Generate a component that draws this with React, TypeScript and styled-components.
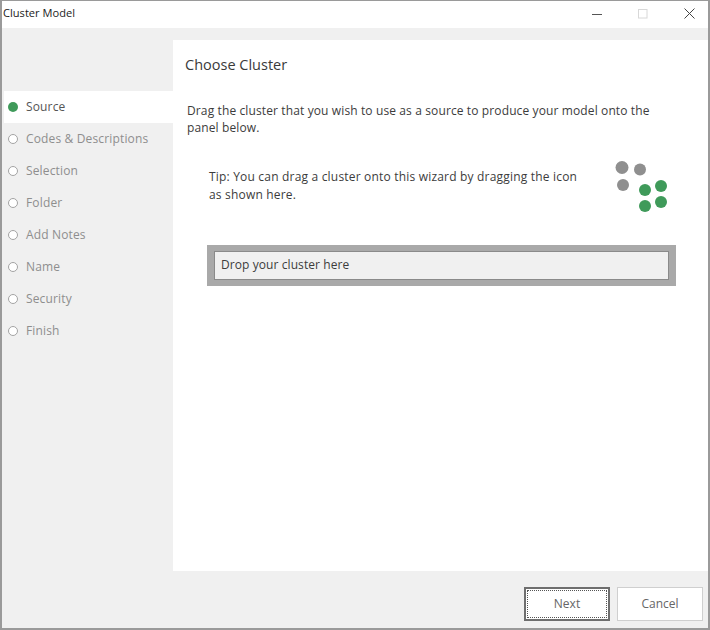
import React from "react";
import styled, { createGlobalStyle } from "styled-components";

const Global = createGlobalStyle`
  html, body { margin: 0; padding: 0; background: #fff; }
  #root { width: 710px; height: 630px; }
`;

const Window = styled.div`
  box-sizing: border-box;
  width: 710px;
  height: 630px;
  display: flex;
  flex-direction: column;
  border: 1px solid #9a9a9a;
  border-width: 1px 2px 2px 2px;
  background: #f0f0f0;
  font-family: "Open Sans", "Noto Sans", sans-serif;
  font-size: 12px;
  color: #3c3c3c;
`;

const TitleBar = styled.header`
  height: 27px;
  flex: none;
  display: flex;
  align-items: center;
  justify-content: space-between;
  background: #fff;
`;

const Title = styled.span`
  font-size: 11.1px;
  color: #222;
  margin-left: 1px;
  padding-bottom: 4px;
`;

const Controls = styled.div`
  display: flex;
  gap: 16px;
  margin-right: 4px;
  padding-bottom: 2px;
`;

const ControlButton = styled.div`
  width: 30px;
  height: 24px;
  display: flex;
  align-items: center;
  justify-content: center;
`;

const Body = styled.div`
  flex: 1;
  display: flex;
  min-height: 0;
  padding-top: 12px;
`;

const Sidebar = styled.nav`
  width: 171px;
  flex: none;
  box-sizing: border-box;
  padding: 51px 0 0 2px;
  display: flex;
  flex-direction: column;
`;

const Step = styled.div<{ $active?: boolean }>`
  height: 32px;
  display: flex;
  align-items: center;
  gap: 8px;
  padding-left: 4px;
  box-sizing: border-box;
  background: ${(p) => (p.$active ? "#fff" : "transparent")};
  color: ${(p) => (p.$active ? "#555" : "#8e8e8e")};
  font-size: 12px;
  letter-spacing: 0.15px;
`;

const StepLabel = styled.span`
  padding-bottom: 2px;
`;

const Dot = styled.span<{ $active?: boolean }>`
  width: 10px;
  height: 10px;
  box-sizing: border-box;
  border-radius: 50%;
  flex: none;
  background: ${(p) => (p.$active ? "#3f9a5a" : "#fff")};
  border: ${(p) => (p.$active ? "none" : "1.5px solid #a3a3a3")};
`;

const Panel = styled.main`
  flex: 1;
  background: #fff;
  padding: 14px 13px 0 12px;
  display: flex;
  flex-direction: column;
  min-width: 0;
`;

const Heading = styled.h1`
  margin: 0;
  font-size: 14.5px;
  font-weight: 400;
  line-height: 22px;
  color: #3a3a3a;
`;

const Intro = styled.p`
  margin: 26px 0 0 2px;
  width: 490px;
  font-size: 12px;
  line-height: 17px;
  color: #3c3c3c;
  letter-spacing: 0.12px;
`;

const TipRow = styled.div`
  margin: 32px 0 0 24px;
  display: flex;
  justify-content: space-between;
  width: 459px;
`;

const TipText = styled.p`
  margin: 0;
  width: 375px;
  font-size: 12px;
  line-height: 18px;
  color: #3c3c3c;
  letter-spacing: 0.19px;
`;

const ClusterIcon = styled.svg`
  display: block;
  flex: none;
  margin: -7px -1px 0 0;
`;

const DropOuter = styled.div`
  margin: 30px 0 0 22px;
  width: 469px;
  height: 41px;
  box-sizing: border-box;
  background: #a9a9a9;
  padding: 6px 7px;
`;

const DropInner = styled.div`
  box-sizing: border-box;
  height: 29px;
  border: 1px solid #8a8a8a;
  background: #f0f0f0;
  display: flex;
  align-items: center;
  padding: 0 0 2px 6px;
  font-size: 12px;
  color: #3c3c3c;
  letter-spacing: 0.08px;
`;

const Footer = styled.footer`
  height: 57px;
  flex: none;
  display: flex;
  justify-content: flex-end;
  align-items: flex-start;
  gap: 7px;
  padding: 16px 5px 0 0;
  box-sizing: border-box;
`;

const Button = styled.button<{ $focused?: boolean }>`
  width: 86px;
  height: 34px;
  box-sizing: border-box;
  background: #fff;
  font-family: inherit;
  font-size: 12px;
  color: #666;
  padding: 0 0 2px;
  border: ${(p) => (p.$focused ? "2px solid #6e6e6e" : "1px solid #cfcfcf")};
  outline: ${(p) => (p.$focused ? "1px dotted #555" : "none")};
  outline-offset: ${(p) => (p.$focused ? "-4px" : "0")};
`;

const steps = ["Source", "Codes & Descriptions", "Selection", "Folder", "Add Notes", "Name", "Security", "Finish"];

const gray: [number, number, number][] = [[7, 6.5, 6.5], [25, 8.5, 6], [8, 24, 6]];
const green: [number, number, number][] = [[30, 29, 6], [46, 25, 6], [30, 45, 6], [46, 41, 6]];

export default function App() {
  return (
    <>
      <Global />
      <Window>
        <TitleBar>
          <Title>Cluster Model</Title>
          <Controls>
            <ControlButton>
              <svg width="10" height="10" viewBox="0 0 10 10">
                <path d="M0 5.5H10" stroke="#555" strokeWidth="1" />
              </svg>
            </ControlButton>
            <ControlButton>
              <svg width="10" height="10" viewBox="0 0 10 10">
                <rect x="0.5" y="0.5" width="8.5" height="8.5" fill="none" stroke="#d8d8d8" />
              </svg>
            </ControlButton>
            <ControlButton>
              <svg width="11" height="11" viewBox="0 0 11 11">
                <path d="M0.5 0.5L10.5 10.5M10.5 0.5L0.5 10.5" stroke="#444" strokeWidth="1" />
              </svg>
            </ControlButton>
          </Controls>
        </TitleBar>
        <Body>
          <Sidebar>
            {steps.map((s, i) => (
              <Step key={s} $active={i === 0}>
                <Dot $active={i === 0} />
                <StepLabel>{s}</StepLabel>
              </Step>
            ))}
          </Sidebar>
          <Panel>
            <Heading>Choose Cluster</Heading>
            <Intro>
              Drag the cluster that you wish to use as a source to produce your model onto the panel below.
            </Intro>
            <TipRow>
              <TipText>Tip: You can drag a cluster onto this wizard by dragging the icon as shown here.</TipText>
              <ClusterIcon width="54" height="54" viewBox="0 0 54 54">
                {gray.map(([x, y, r]) => (
                  <circle key={`${x}-${y}`} cx={x} cy={y} r={r} fill="#8f8f8f" />
                ))}
                {green.map(([x, y, r]) => (
                  <circle key={`${x}-${y}`} cx={x} cy={y} r={r} fill="#3f9a5a" />
                ))}
              </ClusterIcon>
            </TipRow>
            <DropOuter>
              <DropInner>Drop your cluster here</DropInner>
            </DropOuter>
          </Panel>
        </Body>
        <Footer>
          <Button $focused>Next</Button>
          <Button>Cancel</Button>
        </Footer>
      </Window>
    </>
  );
}
